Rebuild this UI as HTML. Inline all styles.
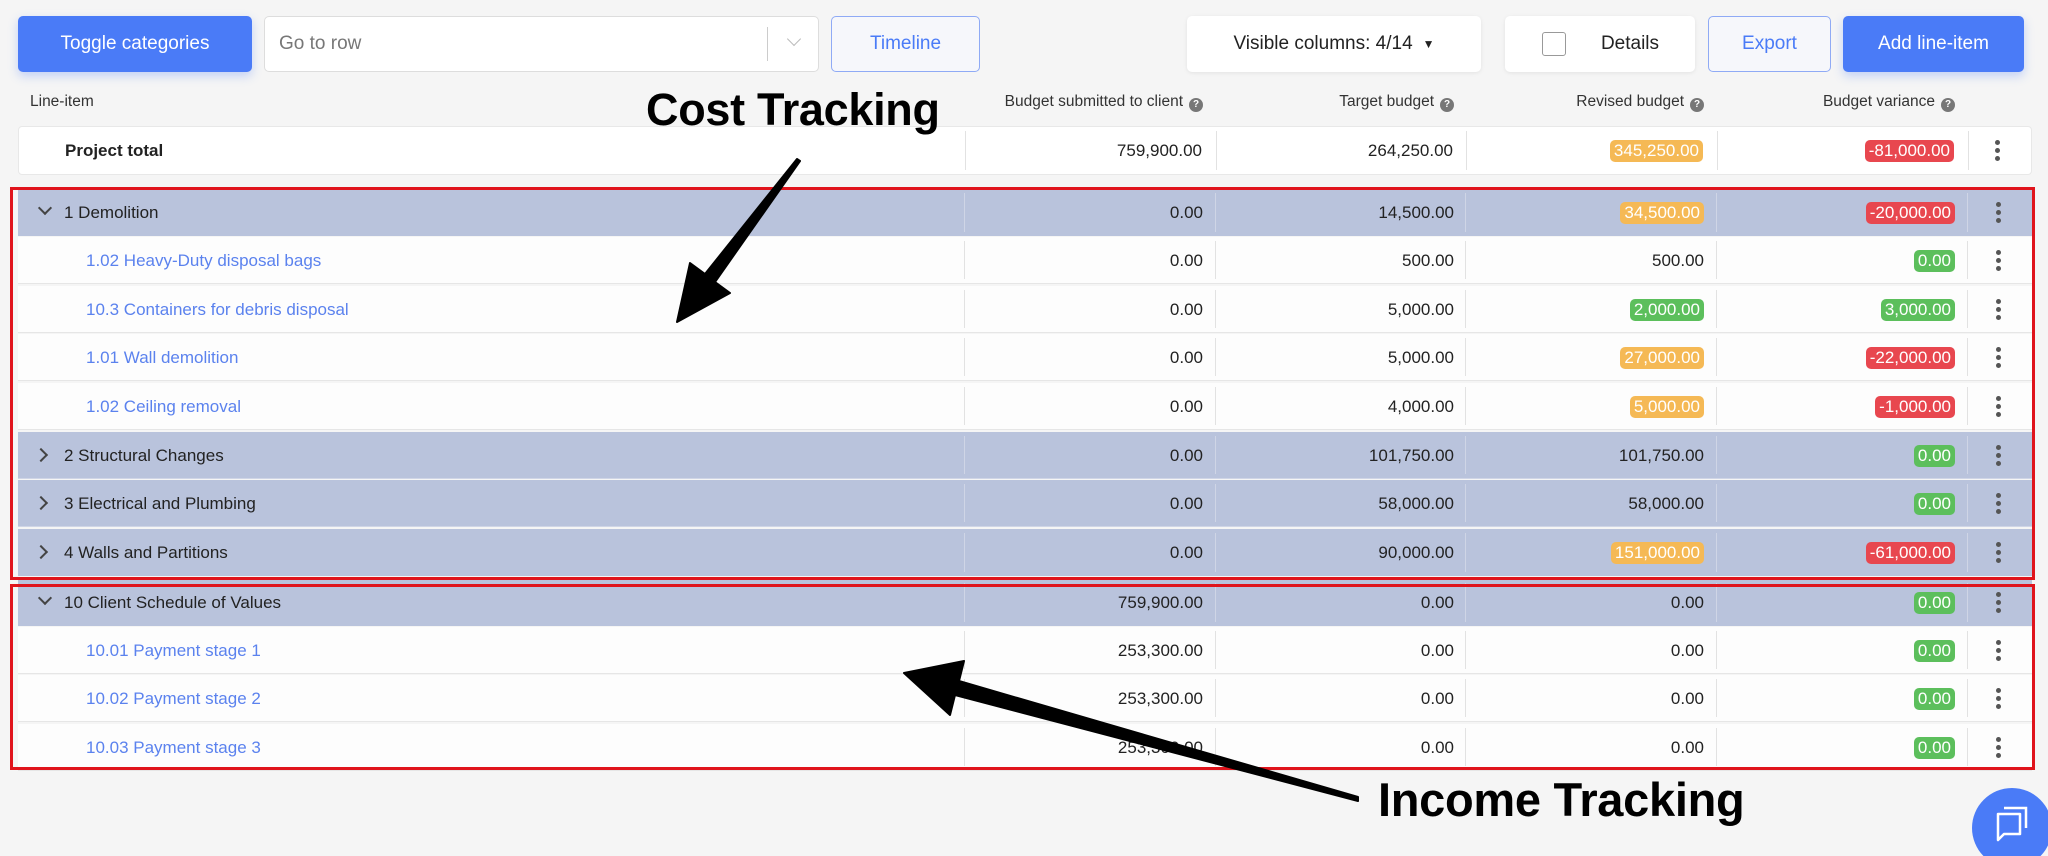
<!DOCTYPE html>
<html><head><meta charset="utf-8"><style>
*{box-sizing:border-box;margin:0;padding:0}
body{width:2048px;height:856px;background:#f5f5f5;font-family:"Liberation Sans",sans-serif;position:relative;overflow:hidden;color:#222}
.a{position:absolute}
.btn{position:absolute;top:16px;height:56px;border-radius:5px;display:flex;align-items:center;justify-content:center;font-size:19px}
.pri{background:#4a7bf7;color:#fff;box-shadow:0 4px 10px rgba(74,123,247,.3)}
.out{border:1.5px solid #8faaf5;color:#4a7bf7;background:#f6f7fb}
.wh{background:#fff;box-shadow:0 1px 4px rgba(0,0,0,.08);color:#222}
.hd{position:absolute;top:93px;font-size:15.5px;color:#333}
.q{display:inline-block;width:14px;height:14px;border-radius:50%;background:#777;color:#fff;font-size:10px;text-align:center;line-height:14px;font-weight:bold;margin-left:6px;vertical-align:-1px}
.row{position:absolute;left:18px;width:2014px;height:47px;font-size:17px}
.cat{background:#b9c3dc}
.ch{background:#fdfdfd;border-bottom:1px solid #e6e6e6}
.row .l{position:absolute;top:0;line-height:47px}
.row .v{position:absolute;top:0;line-height:47px;text-align:right}
.v1{right:829px}.v2{right:578px}.v3{right:328px}.v4{right:77px}
.sep{position:absolute;top:4px;bottom:4px;width:1px;background:#e2e2e2}
.cat .sep{background:#cfd5e6}
.b{display:inline-block;line-height:22px;padding:0 4px;border-radius:5px;color:#fff}
.o{background:#f5b955}.r{background:#e8474f}.g{background:#5cbf5c}
.dots{position:absolute;right:30px;top:13px;width:6px}
.dots i{display:block;width:5px;height:5px;border-radius:50%;background:#555;margin-bottom:3px}
.lk{color:#5b82ee;left:68px}
.cl{left:46px;color:#222}
.chev{position:absolute;left:22px;top:17px;width:10px;height:10px;border-right:2px solid #444;border-bottom:2px solid #444}
.dn{transform:rotate(45deg);top:14px}
.rt{transform:rotate(-45deg);left:18px;top:18px}
</style></head><body>

<div class="btn pri" style="left:18px;width:234px">Toggle categories</div>
<div class="btn" style="left:264px;width:555px;background:#fff;border:1px solid #ddd;justify-content:flex-start;padding-left:14px;color:#777">Go to row
<div class="a" style="left:502px;top:10px;width:1px;height:34px;background:#ccc"></div>
<div class="a" style="left:524px;top:17px;width:10px;height:10px;border-right:1.5px solid #bbb;border-bottom:1.5px solid #bbb;transform:rotate(45deg)"></div></div>
<div class="btn out" style="left:831px;width:149px">Timeline</div>
<div class="btn wh" style="left:1187px;width:294px">Visible columns: 4/14 <span style="font-size:12px;margin-left:10px">&#9660;</span></div>
<div class="btn wh" style="left:1505px;width:190px"><span style="position:absolute;left:37px;top:16px;width:24px;height:24px;border:1.5px solid #999;border-radius:3px"></span><span style="margin-left:60px">Details</span></div>
<div class="btn out" style="left:1708px;width:123px">Export</div>
<div class="btn pri" style="left:1843px;width:181px">Add line-item</div>

<div class="hd" style="left:30px">Line-item</div>
<div class="hd" style="right:845px">Budget submitted to client<span class="q">?</span></div>
<div class="hd" style="right:594px">Target budget<span class="q">?</span></div>
<div class="hd" style="right:344px">Revised budget<span class="q">?</span></div>
<div class="hd" style="right:93px">Budget variance<span class="q">?</span></div>

<div class="row" style="top:126px;height:49px;background:#fff;border:1px solid #e8e8e8;border-radius:4px">
<div class="l" style="left:46px;font-weight:bold;line-height:47px">Project total</div>
<div class="sep" style="left:946px"></div><div class="sep" style="left:1197px"></div><div class="sep" style="left:1447px"></div><div class="sep" style="left:1698px"></div><div class="sep" style="left:1949px"></div>
<div class="v v1">759,900.00</div><div class="v v2">264,250.00</div><div class="v v3"><span class="b o">345,250.00</span></div><div class="v v4"><span class="b r">-81,000.00</span></div><div class="dots"><i></i><i></i><i></i></div></div>

<div class="row cat" style="top:189px"><span class="chev dn"></span><div class="l cl">1 Demolition</div><div class="sep" style="left:946px"></div><div class="sep" style="left:1197px"></div><div class="sep" style="left:1447px"></div><div class="sep" style="left:1698px"></div><div class="sep" style="left:1949px"></div><div class="v v1">0.00</div><div class="v v2">14,500.00</div><div class="v v3"><span class="b o">34,500.00</span></div><div class="v v4"><span class="b r">-20,000.00</span></div><div class="dots"><i></i><i></i><i></i></div></div>
<div class="row ch" style="top:237px"><div class="l lk">1.02 Heavy-Duty disposal bags</div><div class="sep" style="left:946px"></div><div class="sep" style="left:1197px"></div><div class="sep" style="left:1447px"></div><div class="sep" style="left:1698px"></div><div class="sep" style="left:1949px"></div><div class="v v1">0.00</div><div class="v v2">500.00</div><div class="v v3">500.00</div><div class="v v4"><span class="b g">0.00</span></div><div class="dots"><i></i><i></i><i></i></div></div>
<div class="row ch" style="top:286px"><div class="l lk">10.3 Containers for debris disposal</div><div class="sep" style="left:946px"></div><div class="sep" style="left:1197px"></div><div class="sep" style="left:1447px"></div><div class="sep" style="left:1698px"></div><div class="sep" style="left:1949px"></div><div class="v v1">0.00</div><div class="v v2">5,000.00</div><div class="v v3"><span class="b g">2,000.00</span></div><div class="v v4"><span class="b g">3,000.00</span></div><div class="dots"><i></i><i></i><i></i></div></div>
<div class="row ch" style="top:334px"><div class="l lk">1.01 Wall demolition</div><div class="sep" style="left:946px"></div><div class="sep" style="left:1197px"></div><div class="sep" style="left:1447px"></div><div class="sep" style="left:1698px"></div><div class="sep" style="left:1949px"></div><div class="v v1">0.00</div><div class="v v2">5,000.00</div><div class="v v3"><span class="b o">27,000.00</span></div><div class="v v4"><span class="b r">-22,000.00</span></div><div class="dots"><i></i><i></i><i></i></div></div>
<div class="row ch" style="top:383px"><div class="l lk">1.02 Ceiling removal</div><div class="sep" style="left:946px"></div><div class="sep" style="left:1197px"></div><div class="sep" style="left:1447px"></div><div class="sep" style="left:1698px"></div><div class="sep" style="left:1949px"></div><div class="v v1">0.00</div><div class="v v2">4,000.00</div><div class="v v3"><span class="b o">5,000.00</span></div><div class="v v4"><span class="b r">-1,000.00</span></div><div class="dots"><i></i><i></i><i></i></div></div>
<div class="row cat" style="top:432px;border-bottom:1px solid #cfd5e6"><span class="chev rt"></span><div class="l cl">2 Structural Changes</div><div class="sep" style="left:946px"></div><div class="sep" style="left:1197px"></div><div class="sep" style="left:1447px"></div><div class="sep" style="left:1698px"></div><div class="sep" style="left:1949px"></div><div class="v v1">0.00</div><div class="v v2">101,750.00</div><div class="v v3">101,750.00</div><div class="v v4"><span class="b g">0.00</span></div><div class="dots"><i></i><i></i><i></i></div></div>
<div class="row cat" style="top:480px;border-bottom:1px solid #cfd5e6"><span class="chev rt"></span><div class="l cl">3 Electrical and Plumbing</div><div class="sep" style="left:946px"></div><div class="sep" style="left:1197px"></div><div class="sep" style="left:1447px"></div><div class="sep" style="left:1698px"></div><div class="sep" style="left:1949px"></div><div class="v v1">0.00</div><div class="v v2">58,000.00</div><div class="v v3">58,000.00</div><div class="v v4"><span class="b g">0.00</span></div><div class="dots"><i></i><i></i><i></i></div></div>
<div class="row cat" style="top:529px"><span class="chev rt"></span><div class="l cl">4 Walls and Partitions</div><div class="sep" style="left:946px"></div><div class="sep" style="left:1197px"></div><div class="sep" style="left:1447px"></div><div class="sep" style="left:1698px"></div><div class="sep" style="left:1949px"></div><div class="v v1">0.00</div><div class="v v2">90,000.00</div><div class="v v3"><span class="b o">151,000.00</span></div><div class="v v4"><span class="b r">-61,000.00</span></div><div class="dots"><i></i><i></i><i></i></div></div>

<div class="row cat" style="top:579px"><span class="chev dn"></span><div class="l cl">10 Client Schedule of Values</div><div class="sep" style="left:946px"></div><div class="sep" style="left:1197px"></div><div class="sep" style="left:1447px"></div><div class="sep" style="left:1698px"></div><div class="sep" style="left:1949px"></div><div class="v v1">759,900.00</div><div class="v v2">0.00</div><div class="v v3">0.00</div><div class="v v4"><span class="b g">0.00</span></div><div class="dots"><i></i><i></i><i></i></div></div>
<div class="row ch" style="top:627px"><div class="l lk">10.01 Payment stage 1</div><div class="sep" style="left:946px"></div><div class="sep" style="left:1197px"></div><div class="sep" style="left:1447px"></div><div class="sep" style="left:1698px"></div><div class="sep" style="left:1949px"></div><div class="v v1">253,300.00</div><div class="v v2">0.00</div><div class="v v3">0.00</div><div class="v v4"><span class="b g">0.00</span></div><div class="dots"><i></i><i></i><i></i></div></div>
<div class="row ch" style="top:675px"><div class="l lk">10.02 Payment stage 2</div><div class="sep" style="left:946px"></div><div class="sep" style="left:1197px"></div><div class="sep" style="left:1447px"></div><div class="sep" style="left:1698px"></div><div class="sep" style="left:1949px"></div><div class="v v1">253,300.00</div><div class="v v2">0.00</div><div class="v v3">0.00</div><div class="v v4"><span class="b g">0.00</span></div><div class="dots"><i></i><i></i><i></i></div></div>
<div class="row ch" style="top:724px"><div class="l lk">10.03 Payment stage 3</div><div class="sep" style="left:946px"></div><div class="sep" style="left:1197px"></div><div class="sep" style="left:1447px"></div><div class="sep" style="left:1698px"></div><div class="sep" style="left:1949px"></div><div class="v v1">253,300.00</div><div class="v v2">0.00</div><div class="v v3">0.00</div><div class="v v4"><span class="b g">0.00</span></div><div class="dots"><i></i><i></i><i></i></div></div>

<div class="a" style="left:10px;top:187px;width:2025px;height:393px;border:3px solid #e0141c"></div>
<div class="a" style="left:10px;top:584px;width:2025px;height:186px;border:3px solid #e0141c"></div>

<div class="a" style="left:646px;top:84px;font-size:45px;font-weight:bold;color:#000;letter-spacing:-0.3px">Cost Tracking</div>
<div class="a" style="left:1378px;top:772px;font-size:47px;font-weight:bold;color:#000;letter-spacing:-0.3px">Income Tracking</div>
<svg class="a" style="left:0;top:0" width="2048" height="856">
<path d="M797 159 L705 274 L690 263 L677 322 L730 293 L715 282 L800 161 Z" fill="#000" stroke="#000" stroke-width="2" stroke-linejoin="round"/>
<path d="M1358 797 L959 681 L964 661 L904 673 L950 715 L955 695 L1358 801 Z" fill="#000" stroke="#000" stroke-width="2" stroke-linejoin="round"/>
<circle cx="2012" cy="828" r="40" fill="#4a7bf7"/>
<path d="M1998 814 h22 v20 h-16 l-6 6 v-6 z" fill="none" stroke="#fff" stroke-width="2.5" stroke-linejoin="round"/>
<path d="M2004 808 h22 v20" fill="none" stroke="#fff" stroke-width="2.5"/>
</svg>
</body></html>
